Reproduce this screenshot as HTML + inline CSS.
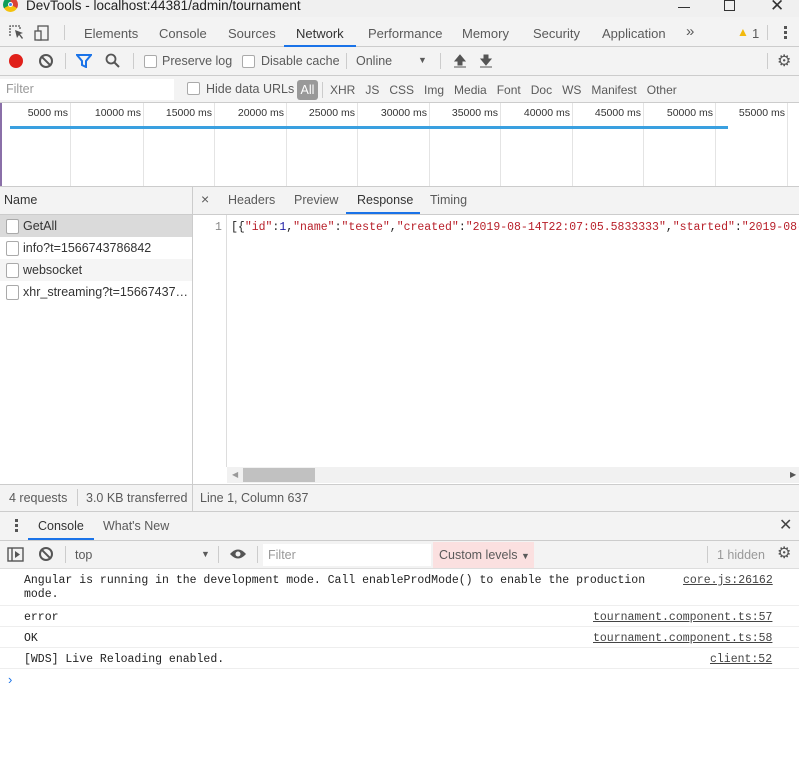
<!DOCTYPE html>
<html><head><meta charset="utf-8"><style>
*{box-sizing:border-box;margin:0;padding:0}
body{width:799px;height:771px;overflow:hidden;background:#fff;font-family:"Liberation Sans",sans-serif;font-size:12.5px;color:#333;position:relative}
.a{position:absolute;white-space:nowrap}
.g{color:#5a5a5a}
.mono{font-family:"Liberation Mono",monospace;font-size:11.5px}
.cb{position:absolute;width:13px;height:13px;border:1px solid #aaa;background:#fff;border-radius:2px}
.vl{position:absolute;width:1px;background:#ccc}
.hl{position:absolute;height:1px;background:#ccc}
</style></head><body>
<div class="a" style="left:0;top:0;width:799px;height:17px;background:#f0f0f0"></div>
<div class="a" style="left:3px;top:-3px;width:15px;height:15px;border-radius:50%;background:conic-gradient(#db4437 0 120deg,#f4c20d 0 240deg,#0f9d58 0)"></div>
<div class="a" style="left:8px;top:2px;width:5px;height:5px;border-radius:50%;background:#4285f4;border:1px solid #fff"></div>
<div class="a" style="left:26px;top:-2px;font-size:13.5px;color:#222">DevTools - localhost:44381/admin/tournament</div>
<div class="a" style="left:678px;top:7px;width:12px;height:1px;background:#333"></div>
<div class="a" style="left:724px;top:0;width:11px;height:11px;border:1px solid #333"></div>
<div class="a" style="left:770px;top:-4px;font-size:17px;color:#333">✕</div>
<div class="a" style="left:0;top:17px;width:799px;height:30px;background:#f3f3f3;border-bottom:1px solid #ccc"></div>
<svg class="a" style="left:9px;top:24px" width="44" height="18"><path d="M1 12V2h10v3" fill="none" stroke="#555" stroke-width="1.3" stroke-dasharray="2 1"/><path d="M6 6l8 3-3 1 3 4-1 1-3-4-2 3z" fill="#555"/><rect x="29" y="2" width="10" height="14" fill="none" stroke="#555" stroke-width="1.3"/><rect x="26" y="7" width="6" height="9" fill="#f3f3f3" stroke="#555" stroke-width="1.3"/></svg>
<div class="vl" style="left:64px;top:25px;height:15px"></div>
<div class="a g" style="left:84px;top:26px;font-size:13px">Elements</div>
<div class="a g" style="left:159px;top:26px;font-size:13px">Console</div>
<div class="a g" style="left:228px;top:26px;font-size:13px">Sources</div>
<div class="a" style="left:296px;top:26px;font-size:13px;color:#333">Network</div>
<div class="a" style="left:284px;top:45px;width:72px;height:2px;background:#1a73e8"></div>
<div class="a g" style="left:368px;top:26px;font-size:13px">Performance</div>
<div class="a g" style="left:462px;top:26px;font-size:13px">Memory</div>
<div class="a g" style="left:533px;top:26px;font-size:13px">Security</div>
<div class="a g" style="left:602px;top:26px;font-size:13px">Application</div>
<div class="a g" style="left:686px;top:23px;font-size:15px">»</div>
<div class="a" style="left:737px;top:25px;font-size:12px;color:#f2b90c">▲</div>
<div class="a g" style="left:752px;top:26px;font-size:13px">1</div>
<div class="vl" style="left:767px;top:25px;height:15px"></div>
<div class="a" style="left:784px;top:26px;width:3px;height:3px;background:#555;box-shadow:0 5px #555,0 10px #555"></div>
<div class="a" style="left:0;top:47px;width:799px;height:29px;background:#f3f3f3;border-bottom:1px solid #ccc"></div>
<div class="a" style="left:9px;top:54px;width:14px;height:14px;border-radius:50%;background:#e0201a"></div>
<div class="a" style="left:39px;top:54px;width:14px;height:14px;border-radius:50%;border:2px solid #555"></div>
<div class="a" style="left:45px;top:54px;width:2px;height:14px;background:#555;transform:rotate(-45deg)"></div>
<div class="vl" style="left:65px;top:53px;height:16px"></div>
<svg class="a" style="left:76px;top:54px" width="16" height="14"><path d="M1 1h14l-5 6v6l-4-2V7z" fill="none" stroke="#1a73e8" stroke-width="2"/></svg>
<svg class="a" style="left:105px;top:53px" width="16" height="16"><circle cx="6" cy="6" r="4.5" fill="none" stroke="#555" stroke-width="1.8"/><path d="M9 9l5 5" stroke="#555" stroke-width="2"/></svg>
<div class="vl" style="left:133px;top:53px;height:16px"></div>
<div class="cb" style="left:144px;top:55px"></div>
<div class="a g" style="left:162px;top:54px">Preserve log</div>
<div class="cb" style="left:242px;top:55px"></div>
<div class="a g" style="left:261px;top:54px">Disable cache</div>
<div class="vl" style="left:346px;top:53px;height:16px"></div>
<div class="a g" style="left:356px;top:54px">Online</div>
<div class="a g" style="left:418px;top:55px;font-size:9px">▼</div>
<div class="vl" style="left:440px;top:53px;height:16px"></div>
<svg class="a" style="left:452px;top:53px" width="44" height="16"><path d="M8 2l-5 6h3v4h4V8h3z M2 14h12" fill="#555" stroke="#555" stroke-width="1"/><path d="M34 12l-5-6h3V2h4v4h3z M28 14h12" fill="#555" stroke="#555" stroke-width="1"/></svg>
<div class="vl" style="left:767px;top:53px;height:16px"></div>
<div class="a" style="left:777px;top:51px;font-size:16px;color:#555">⚙</div>
<div class="a" style="left:0;top:76px;width:799px;height:27px;background:#f3f3f3;border-bottom:1px solid #ccc"></div>
<div class="a" style="left:0;top:79px;width:174px;height:21px;background:#fff"></div>
<div class="a" style="left:6px;top:82px;color:#999">Filter</div>
<div class="cb" style="left:187px;top:82px"></div>
<div class="a g" style="left:206px;top:82px">Hide data URLs</div>
<div class="a" style="left:297px;top:80px;width:21px;height:20px;background:#999;border-radius:3px;color:#fff;text-align:center;line-height:20px">All</div>
<div class="vl" style="left:322px;top:82px;height:16px"></div>
<div class="a g" style="left:330px;top:83px;font-size:12px">XHR&nbsp;&nbsp; JS&nbsp;&nbsp; CSS&nbsp;&nbsp; Img&nbsp;&nbsp; Media&nbsp;&nbsp; Font&nbsp;&nbsp; Doc&nbsp;&nbsp; WS&nbsp;&nbsp; Manifest&nbsp;&nbsp; Other</div>
<div class="a" style="left:0;top:103px;width:2px;height:83px;background:#8a6fa8"></div>
<div class="vl" style="left:70px;top:103px;height:83px;background:#e4e4e4"></div>
<div class="vl" style="left:143px;top:103px;height:83px;background:#e4e4e4"></div>
<div class="vl" style="left:214px;top:103px;height:83px;background:#e4e4e4"></div>
<div class="vl" style="left:286px;top:103px;height:83px;background:#e4e4e4"></div>
<div class="vl" style="left:357px;top:103px;height:83px;background:#e4e4e4"></div>
<div class="vl" style="left:429px;top:103px;height:83px;background:#e4e4e4"></div>
<div class="vl" style="left:500px;top:103px;height:83px;background:#e4e4e4"></div>
<div class="vl" style="left:572px;top:103px;height:83px;background:#e4e4e4"></div>
<div class="vl" style="left:643px;top:103px;height:83px;background:#e4e4e4"></div>
<div class="vl" style="left:715px;top:103px;height:83px;background:#e4e4e4"></div>
<div class="vl" style="left:787px;top:103px;height:83px;background:#e4e4e4"></div>
<div class="a" style="left:0;top:107px;width:787px;font-size:10.5px;color:#333">
<span class="a" style="right:719px">5000 ms</span><span class="a" style="right:646px">10000 ms</span><span class="a" style="right:575px">15000 ms</span><span class="a" style="right:503px">20000 ms</span><span class="a" style="right:432px">25000 ms</span><span class="a" style="right:360px">30000 ms</span><span class="a" style="right:289px">35000 ms</span><span class="a" style="right:217px">40000 ms</span><span class="a" style="right:146px">45000 ms</span><span class="a" style="right:74px">50000 ms</span><span class="a" style="right:2px">55000 ms</span></div>
<div class="a" style="left:10px;top:126px;width:718px;height:3px;background:#3aa0e0"></div>
<div class="a" style="left:0;top:186px;width:799px;height:29px;background:#f3f3f3;border-top:1px solid #ccc;border-bottom:1px solid #ccc"></div>
<div class="a" style="left:4px;top:193px">Name</div>
<div class="vl" style="left:192px;top:186px;height:298px"></div>
<div class="a g" style="left:201px;top:191px;font-size:14px">×</div>
<div class="a g" style="left:228px;top:193px">Headers</div>
<div class="a g" style="left:294px;top:193px">Preview</div>
<div class="a" style="left:357px;top:193px">Response</div>
<div class="a" style="left:346px;top:212px;width:74px;height:2px;background:#1a73e8"></div>
<div class="a g" style="left:430px;top:193px">Timing</div>
<div class="a" style="left:0;top:215px;width:192px;height:22px;background:#dadada"></div>
<div class="a" style="left:0;top:259px;width:192px;height:22px;background:#f5f5f5"></div>
<div class="cb" style="left:6px;top:219px;height:15px"></div><div class="a" style="left:23px;top:219px">GetAll</div>
<div class="cb" style="left:6px;top:241px;height:15px"></div><div class="a" style="left:23px;top:241px">info?t=1566743786842</div>
<div class="cb" style="left:6px;top:263px;height:15px"></div><div class="a" style="left:23px;top:263px">websocket</div>
<div class="cb" style="left:6px;top:285px;height:15px"></div><div class="a" style="left:23px;top:285px">xhr_streaming?t=15667437…</div>
<div class="vl" style="left:226px;top:215px;height:252px;background:#ddd"></div>
<div class="a mono" style="left:215px;top:221px;color:#888">1</div>
<div class="a mono" style="left:231px;top:221px;color:#222">[{<span style="color:#b8202a">"id"</span>:<span style="color:#1c1aa3">1</span>,<span style="color:#b8202a">"name"</span>:<span style="color:#b8202a">"teste"</span>,<span style="color:#b8202a">"created"</span>:<span style="color:#b8202a">"2019-08-14T22:07:05.5833333"</span>,<span style="color:#b8202a">"started"</span>:<span style="color:#b8202a">"2019-08-</span></div>
<div class="a" style="left:227px;top:467px;width:572px;height:16px;background:#f1f1f1"></div>
<div class="a" style="left:243px;top:468px;width:72px;height:14px;background:#c1c1c1"></div>
<div class="a" style="left:232px;top:470px;font-size:8px;color:#999">◀</div>
<div class="a" style="left:790px;top:470px;font-size:8px;color:#555">▶</div>
<div class="a" style="left:0;top:484px;width:799px;height:28px;background:#f3f3f3;border-top:1px solid #ccc;border-bottom:1px solid #ccc"></div>
<div class="a g" style="left:9px;top:491px">4 requests</div>
<div class="vl" style="left:77px;top:489px;height:17px"></div>
<div class="a g" style="left:86px;top:491px">3.0 KB transferred</div>
<div class="vl" style="left:192px;top:485px;height:26px"></div>
<div class="a g" style="left:200px;top:491px">Line 1, Column 637</div>
<div class="a" style="left:0;top:512px;width:799px;height:29px;background:#f3f3f3;border-bottom:1px solid #ccc"></div>
<div class="a" style="left:15px;top:519px;width:3px;height:3px;background:#555;box-shadow:0 5px #555,0 10px #555"></div>
<div class="a" style="left:38px;top:519px">Console</div>
<div class="a" style="left:28px;top:538px;width:66px;height:2px;background:#1a73e8"></div>
<div class="a g" style="left:103px;top:519px">What's New</div>
<div class="a" style="left:779px;top:515px;font-size:16px;color:#444">✕</div>
<div class="a" style="left:0;top:541px;width:799px;height:28px;background:#f3f3f3;border-bottom:1px solid #ddd"></div>
<svg class="a" style="left:7px;top:547px" width="18" height="15"><rect x="1" y="1" width="15" height="13" fill="none" stroke="#555" stroke-width="1.4"/><path d="M5 1v13" stroke="#555" stroke-width="1.4"/><path d="M8 4l5 3.5-5 3.5z" fill="#555"/></svg>
<div class="a" style="left:39px;top:547px;width:14px;height:14px;border-radius:50%;border:2px solid #555"></div>
<div class="a" style="left:45px;top:547px;width:2px;height:14px;background:#555;transform:rotate(-45deg)"></div>
<div class="vl" style="left:65px;top:546px;height:17px"></div>
<div class="a g" style="left:75px;top:548px">top</div>
<div class="a g" style="left:201px;top:549px;font-size:9px">▼</div>
<div class="vl" style="left:218px;top:546px;height:17px"></div>
<svg class="a" style="left:229px;top:548px" width="18" height="12"><path d="M1 6Q9-3 17 6Q9 15 1 6z" fill="#555"/><circle cx="9" cy="6" r="2.5" fill="#f3f3f3"/></svg>
<div class="vl" style="left:257px;top:546px;height:17px"></div>
<div class="a" style="left:263px;top:544px;width:168px;height:22px;background:#fff"></div>
<div class="a" style="left:268px;top:548px;color:#999">Filter</div>
<div class="a" style="left:433px;top:542px;width:101px;height:26px;background:#fbe0e0"></div>
<div class="a g" style="left:439px;top:548px">Custom levels <span style="font-size:9px">▼</span></div>
<div class="vl" style="left:707px;top:546px;height:17px"></div>
<div class="a" style="left:717px;top:548px;color:#999">1 hidden</div>
<div class="a" style="left:777px;top:543px;font-size:16px;color:#555">⚙</div>
<div class="a mono" style="left:24px;top:574px;color:#222;line-height:14px">Angular is running in the development mode. Call enableProdMode() to enable the production<br>mode.</div>
<div class="a mono" style="left:683px;top:574px;color:#444;text-decoration:underline">core.js:26162</div>
<div class="hl" style="left:0;top:605px;width:799px;background:#eee"></div>
<div class="a mono" style="left:24px;top:611px;color:#222">error</div>
<div class="a mono" style="left:593px;top:611px;color:#444;text-decoration:underline">tournament.component.ts:57</div>
<div class="hl" style="left:0;top:626px;width:799px;background:#eee"></div>
<div class="a mono" style="left:24px;top:632px;color:#222">OK</div>
<div class="a mono" style="left:593px;top:632px;color:#444;text-decoration:underline">tournament.component.ts:58</div>
<div class="hl" style="left:0;top:647px;width:799px;background:#eee"></div>
<div class="a mono" style="left:24px;top:653px;color:#222">[WDS] Live Reloading enabled.</div>
<div class="a mono" style="left:710px;top:653px;color:#444;text-decoration:underline">client:52</div>
<div class="hl" style="left:0;top:668px;width:799px;background:#eee"></div>
<div class="a" style="left:8px;top:672px;color:#1a73e8;font-size:13px">›</div>
</body></html>
